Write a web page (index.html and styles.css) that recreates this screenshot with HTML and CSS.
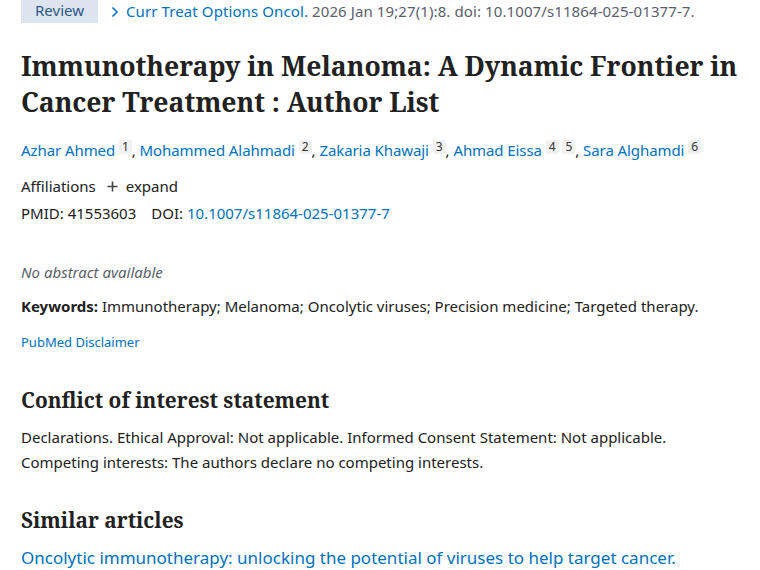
FILE: index.html
```html
<!DOCTYPE html>
<html lang="en">
<head>
<meta charset="utf-8">
<title>Immunotherapy in Melanoma</title>
<link rel="stylesheet" href="styles.css">
</head>
<body>
<main class="article">
  <div class="header-top">
    <span class="pub-type">Review</span>
    <span class="chev"><svg width="8" height="12" viewBox="0 0 8 12"><path d="M1.5 1.5 L6 6 L1.5 10.5" fill="none" stroke="#0071bc" stroke-width="1.6"/></svg></span>
    <span class="citation"><a href="#" class="journal">Curr Treat Options Oncol.</a> 2026 Jan 19;27(1):8. doi: 10.1007/s11864-025-01377-7.</span>
  </div>

  <h1 class="title">Immunotherapy in Melanoma: A Dynamic Frontier in Cancer Treatment : Author List</h1>

  <div class="authors">
    <a href="#">Azhar Ahmed</a> <sup class="aff">1</sup>, <a href="#">Mohammed Alahmadi</a> <sup class="aff">2</sup>, <a href="#">Zakaria Khawaji</a> <sup class="aff">3</sup>, <a href="#">Ahmad Eissa</a> <sup class="aff">4</sup> <sup class="aff">5</sup>, <a href="#">Sara Alghamdi</a> <sup class="aff">6</sup>
  </div>

  <div class="affiliations">
    <span>Affiliations</span>
    <span class="expand"><svg width="11" height="11" viewBox="0 0 11 11"><path d="M5.5 0.5 V10.5 M0.5 5.5 H10.5" stroke="#444" stroke-width="1.6"/></svg>expand</span>
  </div>

  <div class="ids">
    <span>PMID: 41553603</span>
    <span>DOI: <a href="#">10.1007/s11864-025-01377-7</a></span>
  </div>

  <p class="no-abstract">No abstract available</p>

  <p class="keywords"><strong>Keywords:</strong> Immunotherapy; Melanoma; Oncolytic viruses; Precision medicine; Targeted therapy.</p>

  <p class="disclaimer"><a href="#">PubMed Disclaimer</a></p>

  <h2 class="section-title conflict">Conflict of interest statement</h2>
  <p class="statement">Declarations. Ethical Approval: Not applicable. Informed Consent Statement: Not applicable. Competing interests: The authors declare no competing interests.</p>

  <h2 class="section-title similar">Similar articles</h2>
  <a href="#" class="similar-link">Oncolytic immunotherapy: unlocking the potential of viruses to help target cancer.</a>
</main>
</body>
</html>
```
FILE: styles.css
```css
html, body {
  margin: 0;
  padding: 0;
  background: #fff;
}
body {
  font-family: "Noto Sans", "Open Sans", sans-serif;
  font-size: 15px;
  color: #212121;
}
a {
  color: #0071bc;
  text-decoration: none;
}
.article {
  padding: 0 21px;
}
.header-top {
  display: flex;
  align-items: center;
  height: 23px;
}
.pub-type {
  background: #dce4ef;
  color: #2d5a88;
  height: 23px;
  line-height: 21px;
  width: 77px;
  text-align: center;
  font-size: 15px;
}
.chev {
  display: flex;
  align-items: center;
  margin-left: 13px;
  margin-right: 7px;
}
.citation {
  color: #5b616b;
  line-height: 21px;
  white-space: nowrap;
  letter-spacing: 0.1px;
}
.title {
  font-family: "Noto Serif", "DejaVu Serif", serif;
  font-weight: 700;
  font-size: 26.6px;
  line-height: 36px;
  margin: 25px 0 0;
  color: #212121;
  letter-spacing: -0.05px;
}
.authors {
  margin-top: 18px;
  line-height: 24px;
  letter-spacing: -0.08px;
}
.aff {
  display: inline-block;
  background: #f1f1f1;
  color: #333;
  font-size: 12px;
  line-height: 14px;
  padding: 0 3px;
  vertical-align: 5px;
  border-radius: 2px;
  letter-spacing: 0;
}
.affiliations {
  margin-top: 11px;
  line-height: 27px;
  display: flex;
  gap: 11px;
}
.expand {
  display: inline-flex;
  align-items: center;
  gap: 8px;
}
.ids {
  line-height: 27px;
  display: flex;
  gap: 15px;
}
.no-abstract {
  margin: 33px 0 0;
  line-height: 24px;
  font-style: italic;
  color: #5b616b;
}
.keywords {
  margin: 10px 0 0;
  line-height: 24px;
}
.keywords strong {
  font-weight: 700;
}
.disclaimer {
  margin: 14px 0 0;
  font-size: 13px;
  line-height: 20px;
}
.section-title {
  font-family: "Noto Serif", "DejaVu Serif", serif;
  font-weight: 700;
  font-size: 20.8px;
  line-height: 30px;
  margin: 0;
  color: #212121;
}
.conflict {
  margin-top: 33px;
}
.statement {
  margin: 10px 0 0;
  line-height: 25px;
  max-width: 700px;
}
.similar {
  margin-top: 30px;
}
.similar-link {
  display: block;
  margin-top: 10px;
  font-size: 17px;
  line-height: 26px;
}
```
